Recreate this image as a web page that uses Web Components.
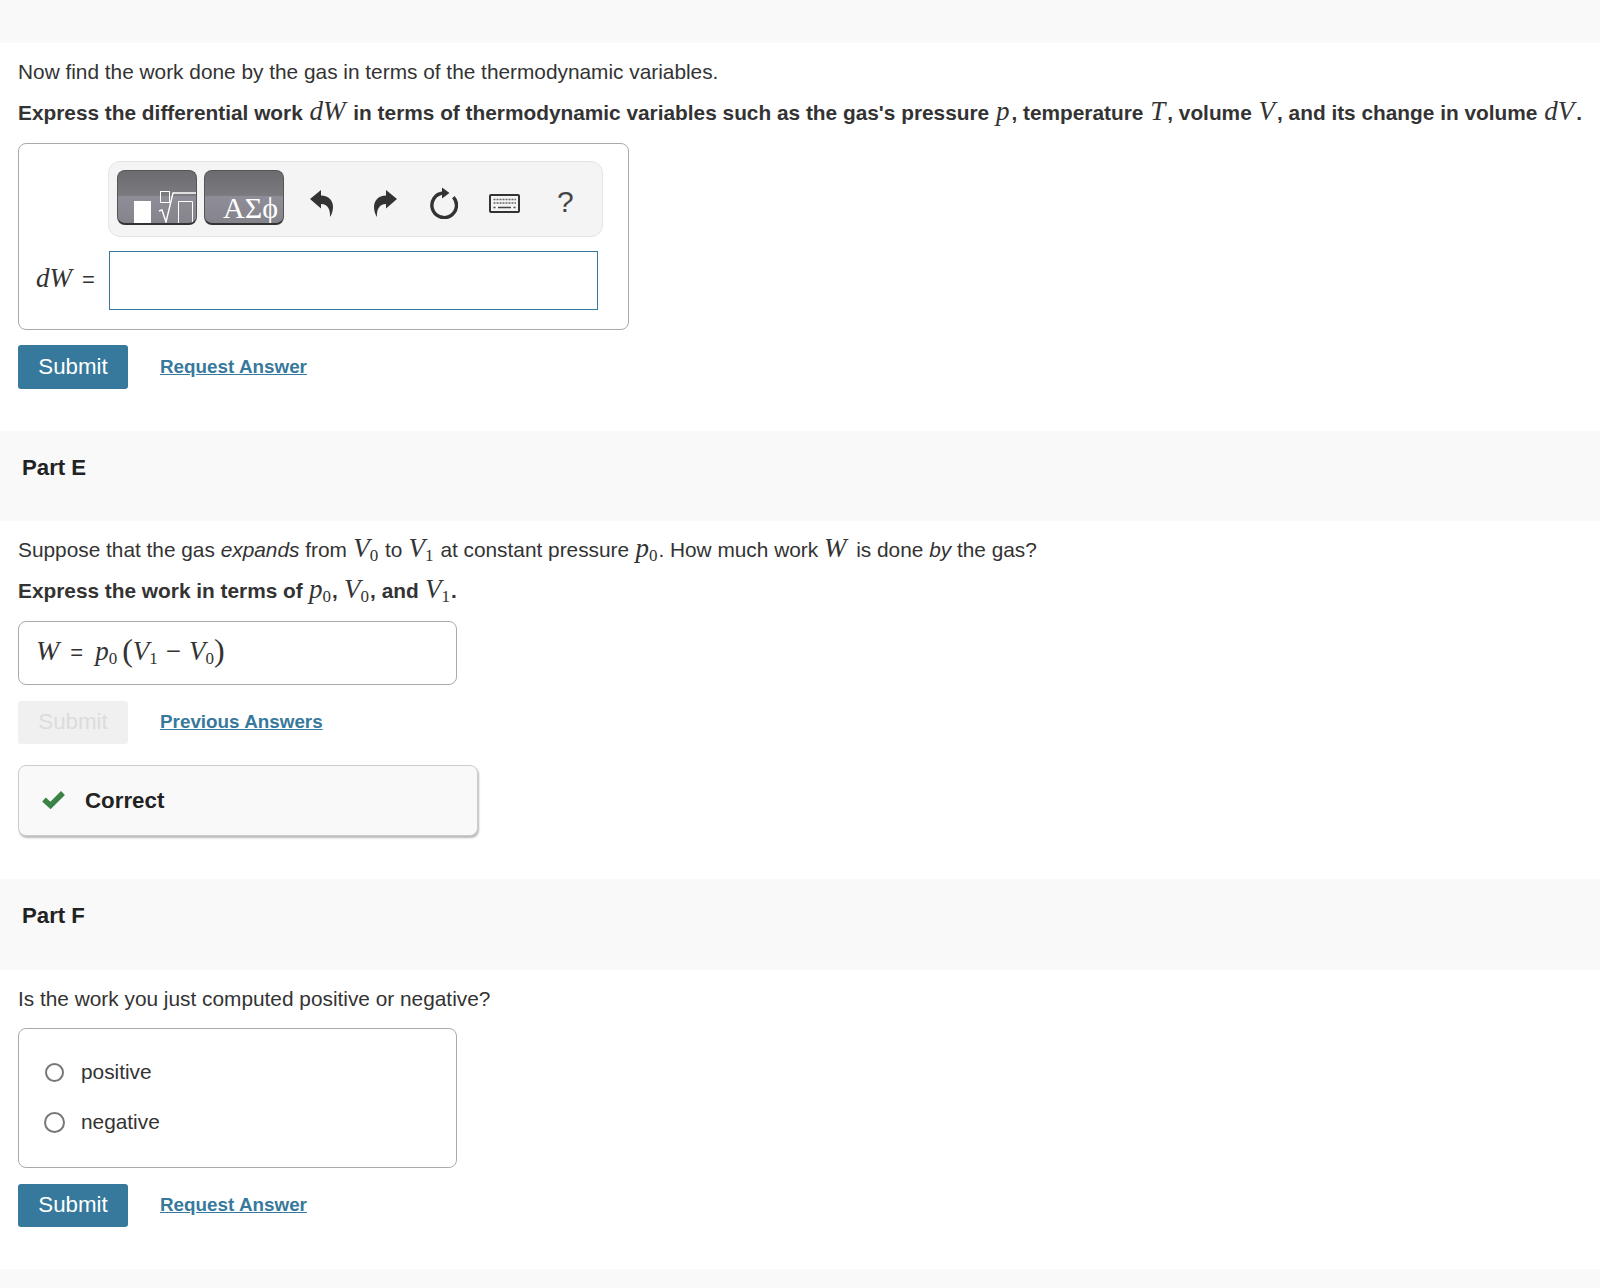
<!DOCTYPE html>
<html lang="en">
<head>
<meta charset="utf-8">
<title>Part E and F</title>
<style>
  html, body { margin: 0; padding: 0; background: #fff; }
  body { font-family: "Liberation Sans", Arial, sans-serif; color: #333; font-size: 20.83px; }
</style>
</head>
<body>
<script>
// Grey band across the page, optionally with a part title.
class PartBand extends HTMLElement {
    constructor() {
        super();
        this.attachShadow({ mode: 'open' }).innerHTML = `
<style>
    :host { display: block; background: #f9f9f9; box-sizing: border-box; height: var(--band-h, 90px); padding: 23px 22px 0; }
    h2 { margin: 0; font-size: 22.2px; line-height: 28px; font-weight: bold; color: #222; }
</style>
<h2><slot></slot></h2>`;
    }
}
customElements.define('part-band', PartBand);

// One body of a part: everything below a band.
class PartBody extends HTMLElement {
    constructor() {
        super();
        this.attachShadow({ mode: 'open' }).innerHTML = `
<style>
    :host { display: block; padding: 15px 18px var(--body-end, 43px); }
</style>
<slot></slot>`;
    }
}
customElements.define('part-body', PartBody);

class PromptLine extends HTMLElement {
    constructor() {
        super();
        this.attachShadow({ mode: 'open' }).innerHTML = `
<style>
    :host { display: block; height: 28px; line-height: 28px; margin-bottom: 13px; white-space: nowrap; }
    :host([strong]) { font-weight: bold; margin-bottom: 16px; }
</style>
<slot></slot>`;
    }
}
customElements.define('prompt-line', PromptLine);

// Typeset maths: serif italic, with <sub> for indices.
class MathVar extends HTMLElement {
    constructor() {
        super();
        this.attachShadow({ mode: 'open' }).innerHTML = `
<style>
    :host { display: inline-block; font-family: "Liberation Serif", "DejaVu Serif", serif; font-style: italic; font-weight: normal; font-size: 27px; line-height: 0; margin: 0 2px 0 1px; color: #333; }
    :host([tight]) { margin: 0 1px 0 0.5px; }
    ::slotted(sub) { font-style: normal; font-size: 17px; line-height: 0; vertical-align: -4px; }
    ::slotted(.fence) { font-style: normal; font-size: 32px; line-height: 0; vertical-align: -1px; }
    ::slotted(.op) { font-style: normal; margin: 0 8px; }
</style>
<slot></slot>`;
    }
}
customElements.define('math-var', MathVar);

class AnswerBox extends HTMLElement {
    constructor() {
        super();
        this.attachShadow({ mode: 'open' }).innerHTML = `
<style>
    :host { display: block; box-sizing: border-box; border: 1px solid #aaa; border-radius: 8px; background: #fff; width: var(--box-w, 439px); height: var(--box-h, auto); padding: var(--box-pad, 0 17px); }
</style>
<slot></slot>`;
    }
}
customElements.define('answer-box', AnswerBox);

// Toolbar above the empty maths input.
class MathToolbar extends HTMLElement {
    constructor() {
        super();
        this.attachShadow({ mode: 'open' }).innerHTML = `
<style>
    :host { display: flex; box-sizing: border-box; width: 495px; height: 76px; margin-left: 72px; border: 1px solid #e4e4e4; border-radius: 12px; background: #f4f4f4; padding: 8px 8px; gap: 7px; align-items: flex-start; }
    .tpl { box-sizing: border-box; width: 80px; height: 55px; border-radius: 8px; border: 1px solid #555; border-bottom: 2px solid #333; background: linear-gradient(#6c6b6f 0, #7b7a7e 47%, #8f8e98 48%, #85848c 100%); overflow: hidden; flex: none; display: flex; justify-content: flex-end; align-items: flex-end; }
    .tpl svg { display: block; }
    .greek { color: #fff; font-family: "Liberation Serif", serif; font-size: 30px; line-height: 31px; padding-right: 5px; white-space: nowrap; }
    .tools { display: flex; align-items: center; box-sizing: border-box; height: 58px; padding-top: 8px; flex: 1; margin-left: 19px; }
    .tools svg { display: block; flex: none; }
    .q { font-size: 30px; color: #444; margin-left: 37px; line-height: 1; margin-top: -2px; }
</style>
<div class="tpl">
    <svg width="78" height="53" viewBox="0 0 78 53">
        <rect x="16" y="31" width="17" height="22" fill="#fff"/>
        <rect x="42.5" y="21.5" width="9" height="11" fill="none" stroke="#fff" stroke-width="1"/>
        <path d="M41 41 L44 40 L48 52 L55 23 H78" fill="none" stroke="#fff" stroke-width="1.4"/>
        <path d="M60.5 53 V31.5 H74.5 V53" fill="none" stroke="#fff" stroke-width="1"/>
    </svg>
</div>
<div class="tpl"><span class="greek">ΑΣϕ</span></div>
<div class="tools">
    <svg width="23" height="27" viewBox="0 0 23 27"><path d="M0 9 L11 0 V5.5 C19 5.5 23 11 23 17 C23 21 21.5 25 20 27 C20.5 20 18 14 11 14 V18.5 Z" fill="#333"/></svg>
    <svg style="margin-left:41px" width="23" height="27" viewBox="0 0 23 27"><path d="M23 9 L12 0 V5.5 C4 5.5 0 11 0 17 C0 21 1.5 25 3 27 C2.5 20 5 14 12 14 V18.5 Z" fill="#333"/></svg>
    <svg style="margin-left:33px" width="28" height="32" viewBox="0 0 28 32">
        <path d="M13 6 A12.3 12.3 0 1 0 23.4 10.1" fill="none" stroke="#333" stroke-width="3.4"/>
        <path d="M12 0.5 L19.5 6 L12 11.5 Z" fill="#333"/>
    </svg>
    <svg style="margin-left:31px" width="31" height="19" viewBox="0 0 31 19">
        <rect x="1" y="1" width="29" height="17" rx="1" fill="none" stroke="#333" stroke-width="2"/>
        <path d="M4.5 5.5 H27 M4.5 9 H27" stroke="#666" stroke-width="1.6" stroke-dasharray="2 1"/>
        <path d="M4.5 13.5 H6.5 M9 13.5 H22 M24.5 13.5 H26.5" stroke="#444" stroke-width="1.6"/>
    </svg>
    <span class="q">?</span>
</div>`;
    }
}
customElements.define('math-toolbar', MathToolbar);

class SubmitRow extends HTMLElement {
    constructor() {
        super();
        this.attachShadow({ mode: 'open' }).innerHTML = `
<style>
    :host { display: flex; align-items: stretch; gap: 32px; margin-top: 16px; height: 43px; }
    .btn { box-sizing: border-box; width: 110px; border-radius: 3px; font: 22.3px/var(--btn-lh, 42px) "Liberation Sans", Arial, sans-serif; text-align: center; background: #37799c; color: #fff; }
    :host([disabled]) .btn { background: #f0f0f0; color: #dcdcdc; }
    a { align-self: center; margin-top: -1px; font-weight: bold; font-size: 18.85px; color: #37799c; text-decoration: underline; }
</style>
<div class="btn">Submit</div>
<a href="#"><slot></slot></a>`;
    }
}
customElements.define('submit-row', SubmitRow);

class FeedbackBox extends HTMLElement {
    constructor() {
        super();
        this.attachShadow({ mode: 'open' }).innerHTML = `
<style>
    :host { display: flex; align-items: center; box-sizing: border-box; width: 460px; height: 71px; margin-top: 21px; padding-left: 23px; gap: 20px; border: 1px solid #ccc; border-radius: 8px; background: #f9f9f9; box-shadow: 1px 2px 2px #bbb; font-size: 22.3px; font-weight: bold; color: #222; }
    svg { display: block; margin-top: -3px; }
</style>
<svg width="23" height="19" viewBox="0 0 23 19"><path d="M2 9.5 L8.5 15.5 L21 3" fill="none" stroke="#3a8245" stroke-width="5.4"/></svg>
<span><slot></slot></span>`;
    }
}
customElements.define('feedback-box', FeedbackBox);

class RadioChoice extends HTMLElement {
    constructor() {
        super();
        this.attachShadow({ mode: 'open' }).innerHTML = `
<style>
    :host { display: flex; align-items: center; height: 28px; }
    .dot { box-sizing: border-box; width: 19px; height: 19px; border: 2px solid #777; border-radius: 50%; background: #fff; flex: none; }
    :host([wide]) .dot { width: 21px; height: 21px; }
    .wrap { width: 38px; flex: none; display: flex; justify-content: center; margin-right: 8px; }
</style>
<span class="wrap"><span class="dot"></span></span>
<span><slot></slot></span>`;
    }
}
customElements.define('radio-choice', RadioChoice);
</script>

<part-band style="--band-h:43px"></part-band>
<part-body style="--body-end:42px">
    <prompt-line>Now find the work done by the gas in terms of the thermodynamic variables.</prompt-line>
    <prompt-line strong>Express the differential work <math-var>dW</math-var> in terms of thermodynamic variables such as the gas's pressure <math-var>p</math-var>, temperature <math-var>T</math-var>, volume <math-var>V</math-var>, and its change in volume <math-var>dV</math-var>.</prompt-line>
    <answer-box style="--box-w:611px;--box-h:187px;--box-pad:17px 0 0 17px">
        <math-toolbar></math-toolbar>
        <div style="display:flex;align-items:flex-start;margin-top:14px">
            <div style="width:73px;flex:none;line-height:57px;white-space:nowrap">
                <math-var style="margin:0 10px 0 0">dW</math-var><span style="font-size:22px">=</span>
            </div>
            <div style="box-sizing:border-box;width:489px;height:59px;border:1px solid #37799c;background:#fff"></div>
        </div>
    </answer-box>
    <submit-row style="margin-top:15px;height:44px;--btn-lh:43px">Request Answer</submit-row>
</part-body>

<part-band>Part E</part-band>
<part-body>
    <prompt-line>Suppose that the gas <em>expands</em> from <math-var tight>V<sub>0</sub></math-var> to <math-var tight>V<sub>1</sub></math-var> at constant pressure <math-var tight>p<sub>0</sub></math-var>. How much work <math-var style="margin:0 4px 0 0">W</math-var> is done <em>by</em> the gas?</prompt-line>
    <prompt-line strong>Express the work in terms of <math-var tight>p<sub>0</sub></math-var>, <math-var tight>V<sub>0</sub></math-var>, and <math-var tight>V<sub>1</sub></math-var>.</prompt-line>
    <answer-box style="--box-h:64px">
        <div style="line-height:62px;white-space:nowrap">
            <math-var style="margin:0 11px 0 0;font-size:28px">W</math-var><span style="margin-right:12px;font-size:22px">=</span><math-var style="margin:0 5px 0 0">p<sub>0</sub></math-var><math-var style="margin:0"><span class="fence">(</span>V<sub>1</sub><span class="op">−</span>V<sub>0</sub><span class="fence">)</span></math-var>
        </div>
    </answer-box>
    <submit-row disabled>Previous Answers</submit-row>
    <feedback-box>Correct</feedback-box>
</part-body>

<part-band style="--band-h:91px">Part F</part-band>
<part-body style="--body-end:42px">
    <prompt-line style="margin-bottom:15px">Is the work you just computed positive or negative?</prompt-line>
    <answer-box style="--box-h:140px;--box-pad:29px 0 0 16px">
        <radio-choice>positive</radio-choice>
        <radio-choice wide style="margin-top:22px">negative</radio-choice>
    </answer-box>
    <submit-row>Request Answer</submit-row>
</part-body>
<part-band style="--band-h:19px"></part-band>
</body>
</html>
